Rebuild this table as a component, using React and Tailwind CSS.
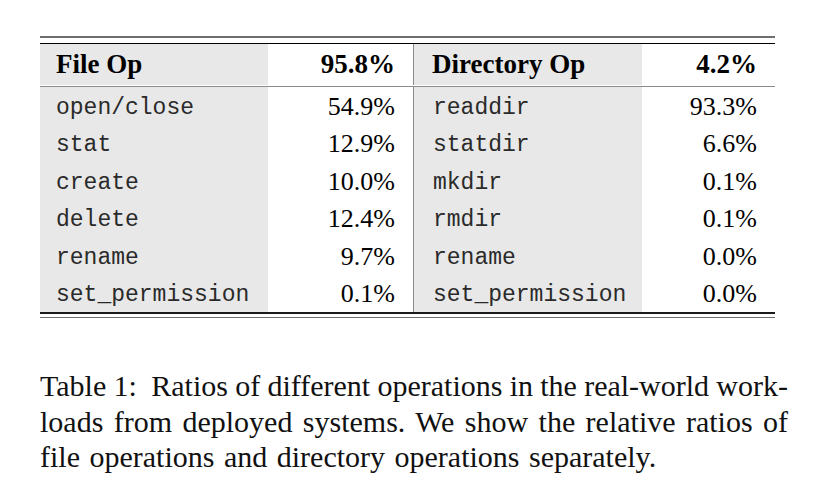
import React from "react";

const fileOps = [
  ["open/close", "54.9%"],
  ["stat", "12.9%"],
  ["create", "10.0%"],
  ["delete", "12.4%"],
  ["rename", "9.7%"],
  ["set_permission", "0.1%"],
];

const dirOps = [
  ["readdir", "93.3%"],
  ["statdir", "6.6%"],
  ["mkdir", "0.1%"],
  ["rmdir", "0.1%"],
  ["rename", "0.0%"],
  ["set_permission", "0.0%"],
];

const serif = "font-['Liberation_Serif',_'Times_New_Roman',_serif]";
const mono = "font-['Liberation_Mono',_'Courier_New',_monospace]";

function Header({ label, value, right }) {
  return (
    <div className={`flex ${right ? "border-l border-[#8a8a8a]" : ""}`}>
      <div className={`flex w-[228px] items-center bg-[#e8e8e8] ${right ? "pl-[18px]" : "pl-[16px]"}`}>
        <span className="text-[27px] font-bold">{label}</span>
      </div>
      <div className="flex flex-1 items-center justify-end bg-white pr-[18px]">
        <span className="text-[27px] font-bold">{value}</span>
      </div>
    </div>
  );
}

function Body({ rows, right }) {
  return (
    <div className={`flex ${right ? "border-l border-[#8a8a8a]" : ""}`}>
      <div className={`w-[228px] bg-[#e8e8e8] ${right ? "pl-[19px]" : "pl-[16px]"}`}>
        {rows.map(([name]) => (
          <div key={name} className={`flex h-[37.5px] items-center pt-[4px] text-[23px] text-[#2a2a2a] ${mono}`}>
            {name}
          </div>
        ))}
      </div>
      <div className="flex-1 bg-white pr-[18px]">
        {rows.map(([name, v]) => (
          <div key={name} className="flex h-[37.5px] items-center justify-end pt-[1px] text-[26px]">
            {v}
          </div>
        ))}
      </div>
    </div>
  );
}

export default function App() {
  return (
    <div className={`h-[492px] w-[830px] bg-white pl-[40px] pt-[36px] text-black ${serif}`}>
      <div className="w-[735px]">
        <div className="h-[2px] bg-[#6e6e6e]" />
        <div className="h-[5px]" />
        <div className="h-[1px] bg-black" />
        <div className="grid h-[36px] grid-cols-[373px_362px]">
          <Header label="File Op" value="95.8%" />
          <Header label="Directory Op" value="4.2%" right />
        </div>
        <div className="h-[2px] bg-[#1a1a1a]" />
        <div className="h-[4px]" />
        <div className="h-[1px] bg-[#8a8a8a]" />
        <div className="grid grid-cols-[373px_362px]">
          <Body rows={fileOps} />
          <Body rows={dirOps} right />
        </div>
        <div className="h-[2px] bg-[#1a1a1a]" />
        <div className="h-[3px]" />
        <div className="h-[1px] bg-[#6e6e6e]" />
      </div>
      <div className="mt-[50px] w-[748px] text-[30px] leading-[35.5px] text-[#111]">
        <div className="whitespace-nowrap text-justify [word-spacing:-4px] [text-align-last:justify]">
          Table 1:&nbsp; Ratios of different operations in the real-world work-
        </div>
        <div className="whitespace-nowrap text-justify [word-spacing:-4px] [text-align-last:justify]">
          loads from deployed systems. We show the relative ratios of
        </div>
        <div className="whitespace-nowrap [word-spacing:2px]">file operations and directory operations separately.</div>
      </div>
    </div>
  );
}
